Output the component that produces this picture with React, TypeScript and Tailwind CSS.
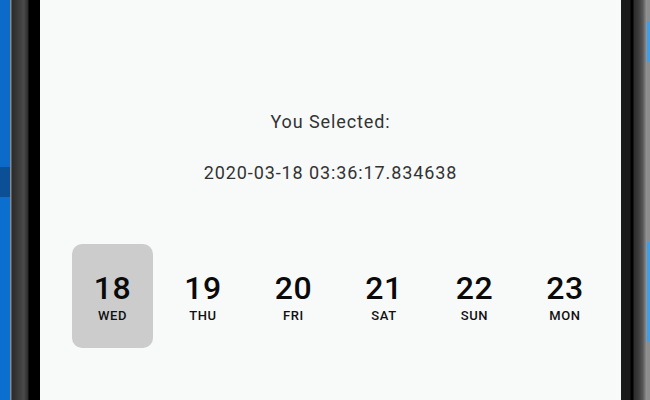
const days = [
  { d: '18', w: 'WED', selected: true },
  { d: '19', w: 'THU' },
  { d: '20', w: 'FRI' },
  { d: '21', w: 'SAT' },
  { d: '22', w: 'SUN' },
  { d: '23', w: 'MON' },
]

function DayTile({ d, w, selected }: { d: string; w: string; selected?: boolean }) {
  return (
    <div
      className={
        'flex h-[104px] w-[81px] shrink-0 flex-col items-center pt-[28px] rounded-[10px] ' +
        (selected ? 'bg-[#cccccc]' : '')
      }
    >
      <span className="text-[32px] leading-[32px] font-medium tracking-[0.5px] text-[#0a0a0a]">{d}</span>
      <span className="mt-[4px] text-[13px] leading-[16px] font-medium tracking-[0.6px] text-[#111]">{w}</span>
    </div>
  )
}

export default function App() {
  return (
    <div className="flex h-[400px] w-[650px] overflow-hidden font-['Roboto',sans-serif]">
      {/* desktop behind the emulator */}
      <div className="flex w-[10px] flex-col bg-[#0a6fcf]">
        <div className="h-[167px] bg-[#0c6bc8]" />
        <div className="h-[30px] bg-[#0b4f94]" />
        <div className="flex-1 bg-[#0a6fcf]" />
      </div>
      {/* left bezel */}
      <div className="w-[30px] bg-[linear-gradient(90deg,#8a8a8a_0px,#8a8a8a_1px,#2b2b2b_2px,#3a3a3a_8px,#4a4a4a_14px,#2a2a2a_18px,#000_19px,#000_100%)]" />

      {/* phone screen */}
      <div className="flex min-w-0 flex-1 flex-col bg-[#f8f9f9]">
        <div className="h-[112px]" />
        <p className="text-center text-[18px] leading-[20px] tracking-[0.9px] text-[#333]">You Selected:</p>
        <p className="mt-[31px] text-center text-[18px] leading-[20px] tracking-[0.9px] text-[#333]">
          2020-03-18 03:36:17.834638
        </p>
        <div className="mt-[61px] flex gap-[9.5px] pl-[32px]">
          {days.map((x) => (
            <DayTile key={x.d} {...x} />
          ))}
        </div>
      </div>

      {/* right bezel */}
      <div className="w-[26px] bg-[linear-gradient(90deg,#1a1a1a_0px,#1a1a1a_9px,#000_10px,#000_12px,#2c2c2c_13px,#3d3d3d_18px,#5a5a5a_22px,#7a7a7a_24px,#999_26px)]" />
      <div className="flex w-[3px] flex-col bg-[#8d8d8d]">
        <div className="h-[22px]" />
        <div className="h-[40px] bg-[#3aa0ee]" />
        <div className="h-[180px]" />
        <div className="h-[100px] bg-[#3aa0ee]" />
      </div>
    </div>
  )
}
